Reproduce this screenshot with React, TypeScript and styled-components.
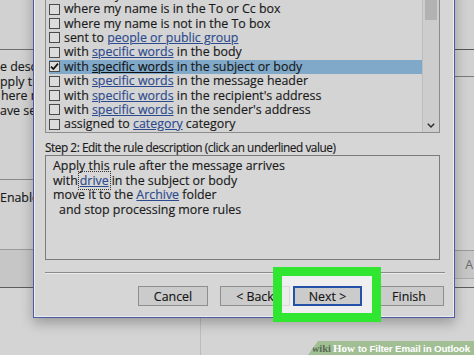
import React from "react";
import styled, { createGlobalStyle } from "styled-components";

const GlobalStyle = createGlobalStyle`
  html, body {
    margin: 0;
    padding: 0;
    background: #d3d3d3;
    overflow: hidden;
  }
  body {
    font-family: "Open Sans", "Noto Sans", sans-serif;
  }
`;

const Stage = styled.div`
  position: relative;
  width: 474px;
  height: 355px;
  overflow: hidden;
  background: #d4d4d4;
  color: #1a1a1a;
  font-size: 12.4px;
  -webkit-text-stroke: 0.15px #1a1a1a;
`;

/* window behind the dialog */
const BackWindow = styled.div`
  position: absolute;
  left: 0;
  top: 0;
  width: 474px;
  height: 287px;
  display: flex;
  background: #d1d1d1;
  border-bottom: 1px solid #5d5d5d;
`;

const LeftPane = styled.div`
  width: 240px;
  display: flex;
  flex-direction: column;
`;

const RightPane = styled.div`
  flex: 1;
  display: flex;
  flex-direction: column;
`;

const PaneBand = styled.div<{ $h: number; $dark?: boolean; $line?: string; $top?: number }>`
  height: ${(p) => p.$h}px;
  flex-shrink: 0;
  box-sizing: border-box;
  padding-top: ${(p) => p.$top || 0}px;
  background: ${(p) => (p.$dark ? "#c6c6c6" : "transparent")};
  border-bottom: 1px solid ${(p) => p.$line || "#7a7a7a"};
  display: flex;
  flex-direction: column;
  justify-content: ${(p) => (p.$top ? "flex-start" : "center")};
`;

const BackText = styled.div<{ $indent?: number }>`
  white-space: nowrap;
  line-height: 14.7px;
  padding-left: ${(p) => p.$indent || 0}px;
`;

const RightLabel = styled.div`
  align-self: flex-end;
  padding-right: 1px;
  color: #6a6a6a;
  -webkit-text-stroke: 0;
`;

const FloorLine = styled.div`
  position: absolute;
  left: 200px;
  top: 317px;
  width: 1px;
  height: 40px;
  background: #bdbdbd;
`;

/* the rules wizard dialog */
const Dialog = styled.div`
  position: absolute;
  left: 33px;
  top: -32px;
  width: 422px;
  height: 350px;
  box-sizing: border-box;
  border: 1px solid #4f5aa6;
  background: #d6d6d6;
  box-shadow: inset 0 0 0 1px #ececec, 0 5px 12px rgba(0, 0, 0, 0.28);
  padding: 15px 10px 0 11px;
  display: flex;
  flex-direction: column;
`;

const ListBox = styled.div`
  width: 395px;
  height: 149px;
  box-sizing: border-box;
  border: 1px solid #8c8c8c;
  background: #d4d4d4;
  display: flex;
  overflow: hidden;
`;

const Rows = styled.div`
  flex: 1;
  padding: 2.6px 0 0 3px;
  display: flex;
  flex-direction: column;
`;

const Row = styled.div<{ $selected?: boolean }>`
  height: 14.4px;
  line-height: 14px;
  flex-shrink: 0;
  display: flex;
  align-items: center;
  gap: 4px;
  white-space: nowrap;
  background: ${(p) => (p.$selected ? "#80a9c9" : "transparent")};
`;

const Check = styled.span`
  width: 11px;
  height: 11px;
  box-sizing: border-box;
  border: 1px solid #4b4b4b;
  background: #dcdcdc;
  display: inline-flex;
  align-items: center;
  justify-content: center;
  flex-shrink: 0;
`;

const Link = styled.span<{ $plain?: boolean }>`
  color: ${(p) => (p.$plain ? "#111" : "#2c4b8e")};
  -webkit-text-stroke-color: ${(p) => (p.$plain ? "#111" : "#2c4b8e")};
  text-decoration: underline;
  text-underline-offset: 1px;
`;

const FocusLink = styled(Link)`
  outline: 1px dotted #333;
  outline-offset: 0;
  padding: 0 1px;
  margin: 0 2px 0 1px;
`;

const Scrollbar = styled.div`
  width: 16px;
  flex-shrink: 0;
  border-left: 1px solid #bdbdbd;
  background: #cdcdcd;
  display: flex;
  flex-direction: column;
  align-items: center;
  justify-content: space-between;
  padding: 0 0 4px;
`;

const Thumb = styled.div`
  width: 12px;
  height: 35px;
  background: #b2b2b2;
`;

const StepLabel = styled.div`
  margin-top: 7px;
  line-height: 14px;
  font-size: 11.8px;
  letter-spacing: -0.45px;
  white-space: nowrap;
`;

const DescBox = styled.div`
  margin-top: 1px;
  width: 395px;
  height: 105px;
  box-sizing: border-box;
  border: 1px solid #7c7c7c;
  padding: 3px 7px;
`;

const DescLine = styled.div<{ $indent?: number }>`
  line-height: 14.5px;
  white-space: nowrap;
  padding-left: ${(p) => p.$indent || 0}px;
`;

const Separator = styled.div`
  margin-top: 12px;
  width: 400px;
  height: 1px;
  background: #8a8a8a;
  border-bottom: 1px solid #ececec;
`;

const ButtonRow = styled.div`
  margin-top: 12px;
  display: flex;
  justify-content: flex-end;
`;

const Button = styled.div<{ $gap?: number; $default?: boolean; $w?: number }>`
  position: relative;
  z-index: ${(p) => (p.$default ? 3 : "auto")};
  width: ${(p) => p.$w || 70}px;
  height: 20px;
  box-sizing: border-box;
  margin-left: ${(p) => p.$gap || 0}px;
  background: #cbcbcb;
  border: ${(p) => (p.$default ? "2px solid #2552a9" : "1px solid #8e8e8e")};
  display: flex;
  align-items: center;
  justify-content: center;
  color: #141414;
`;

const Highlight = styled.div`
  position: absolute;
  left: 273px;
  top: 267px;
  width: 108px;
  height: 55px;
  box-sizing: border-box;
  border: 9px solid #30e630;
  background: rgba(250, 250, 250, 0.7);
  z-index: 2;
`;

const Watermark = styled.div`
  position: absolute;
  right: 0;
  bottom: 0;
  width: 166px;
  height: 14px;
  background: rgba(150, 185, 135, 0.82);
  clip-path: polygon(10px 0, 100% 0, 100% 100%, 0 100%);
  display: flex;
  align-items: center;
  justify-content: flex-end;
  padding-right: 4px;
  box-sizing: border-box;
  white-space: nowrap;
  font-family: "Liberation Sans", Arial, sans-serif;
  font-weight: bold;
  font-size: 9.8px;
  letter-spacing: -0.15px;
  color: #fff;
  -webkit-text-stroke: 0;
`;

const WikiMark = styled.span`
  font-family: "Liberation Serif", serif;
  font-size: 10.5px;
  letter-spacing: 0;
  color: #5a6c53;
  margin-right: 2px;
`;

const HowMark = styled.span`
  font-family: "Liberation Serif", serif;
  font-size: 11px;
  letter-spacing: 0;
  margin-right: 3px;
`;

const CheckMark = () => (
  <svg width="9" height="9" viewBox="0 0 9 9">
    <path d="M1 4.6 L3.4 7 L8 1.6" fill="none" stroke="#111" strokeWidth="1.7" />
  </svg>
);

const Chevron = () => (
  <svg width="8" height="5" viewBox="0 0 8 5">
    <path d="M0.8 0.8 L4 4 L7.2 0.8" fill="none" stroke="#2a2a2a" strokeWidth="1.4" />
  </svg>
);

type Cond = { before: string; link?: string; after?: string; checked?: boolean };

const conditions: Cond[] = [
  { before: "where my name is in the Cc box" },
  { before: "where my name is in the To or Cc box" },
  { before: "where my name is not in the To box" },
  { before: "sent to ", link: "people or public group" },
  { before: "with ", link: "specific words", after: " in the body" },
  { before: "with ", link: "specific words", after: " in the subject or body", checked: true },
  { before: "with ", link: "specific words", after: " in the message header" },
  { before: "with ", link: "specific words", after: " in the recipient's address" },
  { before: "with ", link: "specific words", after: " in the sender's address" },
  { before: "assigned to ", link: "category", after: " category" },
];

export default function App() {
  return (
    <>
      <GlobalStyle />
      <Stage>
        <BackWindow>
          <LeftPane>
            <PaneBand $h={50} $line="#6e6e6e" />
            <PaneBand $h={130} $line="#8a8a8a" $top={10}>
              <BackText>e description (click an underlined value)</BackText>
              <BackText>pply this rule after the message arrives</BackText>
              <BackText $indent={1}>here my name is in the To box</BackText>
              <BackText>ave sent a reply</BackText>
            </PaneBand>
            <PaneBand $h={70} $line="#9a9a9a" $top={11}>
              <BackText>Enable this rule</BackText>
            </PaneBand>
            <PaneBand $h={37} $dark $line="transparent" />
          </LeftPane>
          <RightPane>
            <PaneBand $h={50} $line="#555" />
            <PaneBand $h={27} $line="#7a7a7a" />
            <PaneBand $h={174} $line="#9a9a9a" />
            <PaneBand $h={28} $dark $line="#aaa">
              <RightLabel>A</RightLabel>
            </PaneBand>
          </RightPane>
        </BackWindow>
        <FloorLine />

        <Dialog>
          <ListBox>
            <Rows>
              {conditions.map((c, i) => (
                <Row key={i} $selected={c.checked}>
                  <Check>{c.checked && <CheckMark />}</Check>
                  <span>
                    {c.before}
                    {c.link && <Link $plain={c.checked}>{c.link}</Link>}
                    {c.after}
                  </span>
                </Row>
              ))}
            </Rows>
            <Scrollbar>
              <Thumb />
              <Chevron />
            </Scrollbar>
          </ListBox>

          <StepLabel>Step 2: Edit the rule description (click an underlined value)</StepLabel>
          <DescBox>
            <DescLine>Apply this rule after the message arrives</DescLine>
            <DescLine>
              with<FocusLink>drive</FocusLink>in the subject or body
            </DescLine>
            <DescLine>
              move it to the <Link>Archive</Link> folder
            </DescLine>
            <DescLine $indent={6}>and stop processing more rules</DescLine>
          </DescBox>

          <Separator />
          <ButtonRow>
            <Button>Cancel</Button>
            <Button $gap={12}>&lt; Back</Button>
            <Button $gap={3} $w={69} $default>
              Next &gt;
            </Button>
            <Button $gap={12}>Finish</Button>
          </ButtonRow>
        </Dialog>

        <Highlight />
        <Watermark>
          <WikiMark>wiki</WikiMark>
          <HowMark>How</HowMark>
          to Filter Email in Outlook
        </Watermark>
      </Stage>
    </>
  );
}
